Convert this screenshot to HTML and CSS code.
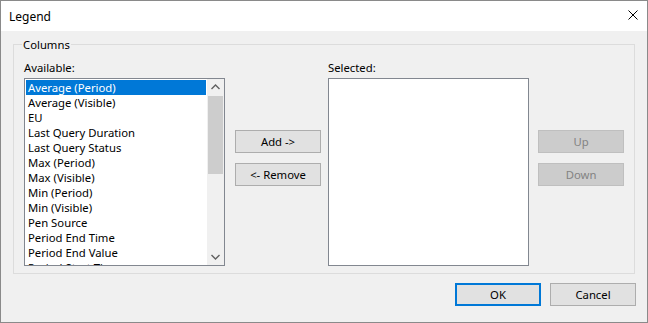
FILE: index.html
```html
<!DOCTYPE html>
<html>
<head>
<meta charset="utf-8">
<link rel="stylesheet" href="styles.css">
</head>
<body>
<div class="window">
  <div class="titlebar">
    <span class="title">Legend</span>
    <svg class="close" width="10" height="10" viewBox="0 0 10 10"><path d="M0.5 0.5 L9.5 9.5 M9.5 0.5 L0.5 9.5" stroke="#000" stroke-width="1" fill="none"/></svg>
  </div>
  <div class="content">
    <div class="group">
      <span class="group-label">Columns</span>
      <div class="group-inner">
        <div class="list-col">
          <div class="lbl">Available:</div>
          <div class="listbox">
            <ul class="items">
              <li class="sel">Average (Period)</li>
              <li>Average (Visible)</li>
              <li>EU</li>
              <li>Last Query Duration</li>
              <li>Last Query Status</li>
              <li>Max (Period)</li>
              <li>Max (Visible)</li>
              <li>Min (Period)</li>
              <li>Min (Visible)</li>
              <li>Pen Source</li>
              <li>Period End Time</li>
              <li>Period End Value</li>
              <li>Period Start Time</li>
            </ul>
            <div class="scrollbar">
              <div class="sb-btn"><svg width="17" height="17" viewBox="0 0 17 17"><polyline points="4.5,10 8.5,6 12.5,10" fill="none" stroke="#606060" stroke-width="1.4"/></svg></div>
              <div class="sb-track"><div class="sb-thumb"></div></div>
              <div class="sb-btn"><svg width="17" height="17" viewBox="0 0 17 17"><polyline points="4.5,7 8.5,11 12.5,7" fill="none" stroke="#606060" stroke-width="1.4"/></svg></div>
            </div>
          </div>
        </div>
        <div class="btn-col mid">
          <button class="btn">Add -&gt;</button>
          <button class="btn">&lt;- Remove</button>
        </div>
        <div class="list-col sel-col">
          <div class="lbl">Selected:</div>
          <div class="listbox"></div>
        </div>
        <div class="btn-col right">
          <button class="btn" disabled>Up</button>
          <button class="btn" disabled>Down</button>
        </div>
      </div>
    </div>
    <div class="footer">
      <button class="btn ok">OK</button>
      <button class="btn">Cancel</button>
    </div>
  </div>
</div>
</body>
</html>
```
FILE: styles.css
```css
html, body {
  margin: 0;
  padding: 0;
  background: #f0f0f0;
}
.window {
  width: 648px;
  height: 323px;
  box-sizing: border-box;
  border: 1px solid #8a8a8a;
  background: #f0f0f0;
  display: flex;
  flex-direction: column;
  font-family: "Noto Sans", "Open Sans", sans-serif;
  font-size: 11.3px;
  color: #000;
}
.titlebar {
  height: 30px;
  background: #fff;
  display: flex;
  align-items: center;
  padding-left: 8px;
}
.title {
  font-size: 12px;
}
.close {
  margin-left: auto;
  margin-right: 9px;
  margin-bottom: 2px;
}
.content {
  padding: 0 12px;
  flex: 1;
  display: flex;
  flex-direction: column;
}
.group {
  margin-top: 13px;
  height: 230px;
  box-sizing: border-box;
  border: 1px solid #dcdcdc;
  position: relative;
  padding: 0 9px 0 10px;
}
.group-label {
  position: absolute;
  top: -8px;
  left: 8px;
  padding: 0 1px;
  line-height: 15px;
  background: #f0f0f0;
}
.group-inner {
  display: flex;
  align-items: flex-start;
  padding-top: 15px;
}
.list-col {
  width: 201px;
  display: flex;
  flex-direction: column;
}
.lbl {
  line-height: 15px;
  height: 15px;
  margin-bottom: 3px;
}
.listbox {
  height: 188px;
  box-sizing: border-box;
  border: 1px solid #828790;
  background: #fff;
  display: flex;
  overflow: hidden;
}
.items {
  list-style: none;
  margin: 0;
  padding: 1px;
  flex: 1;
  overflow: hidden;
}
.items li {
  height: 15px;
  line-height: 15px;
  padding-left: 2px;
  white-space: nowrap;
}
.items li.sel {
  background: #0078d7;
  color: #fff;
}
.scrollbar {
  width: 17px;
  background: #f0f0f0;
  display: flex;
  flex-direction: column;
}
.sb-btn {
  height: 17px;
}
.sb-btn svg {
  display: block;
}
.sb-track {
  flex: 1;
}
.sb-thumb {
  height: 78px;
  margin: 0 1px;
  background: #cdcdcd;
}
.btn-col {
  width: 86px;
  display: flex;
  flex-direction: column;
  gap: 10px;
  padding-top: 70px;
}
.btn-col.mid {
  margin-left: 10px;
}
.sel-col {
  margin-left: 7px;
}
.btn-col.right {
  margin-left: 9px;
}
.btn {
  width: 86px;
  height: 23px;
  box-sizing: border-box;
  margin: 0;
  padding: 0;
  border: 1px solid #adadad;
  background: #e1e1e1;
  font-family: inherit;
  font-size: inherit;
  color: #000;
}
.btn:disabled {
  background: #cccccc;
  border-color: #bfbfbf;
  color: #838383;
}
.btn.ok {
  border: 2px solid #0078d7;
}
.footer {
  display: flex;
  justify-content: flex-end;
  gap: 9px;
  margin-top: 9px;
  margin-right: -1px;
}
```
